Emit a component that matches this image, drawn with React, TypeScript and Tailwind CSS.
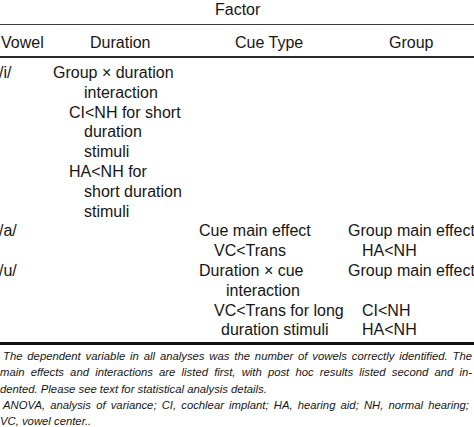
import React from "react";

type Line = { text: string; indent?: number };

type Row = {
  vowel: string;
  duration: Line[];
  cue: Line[];
  group: Line[];
};

const rows: Row[] = [
  {
    vowel: "/i/",
    duration: [
      { text: "Group × duration" },
      { text: "interaction", indent: 31 },
      { text: "CI<NH for short", indent: 16 },
      { text: "duration", indent: 31 },
      { text: "stimuli", indent: 31 },
      { text: "HA<NH for", indent: 16 },
      { text: "short duration", indent: 31 },
      { text: "stimuli", indent: 31 },
    ],
    cue: [],
    group: [],
  },
  {
    vowel: "/a/",
    duration: [],
    cue: [{ text: "Cue main effect" }, { text: "VC<Trans", indent: 15 }],
    group: [{ text: "Group main effect" }, { text: "HA<NH", indent: 14 }],
  },
  {
    vowel: "/u/",
    duration: [],
    cue: [
      { text: "Duration × cue" },
      { text: "interaction", indent: 27 },
      { text: "VC<Trans for long", indent: 15 },
      { text: "duration stimuli", indent: 22 },
    ],
    group: [
      { text: "Group main effect" },
      { text: "" },
      { text: "CI<NH", indent: 14 },
      { text: "HA<NH", indent: 14 },
    ],
  },
];

const Cell: React.FC<{ lines: Line[] }> = ({ lines }) => (
  <div className="flex flex-col">
    {lines.map((line, i) => (
      <div
        key={i}
        className="h-[19.8px] whitespace-nowrap"
        style={{ paddingLeft: line.indent ?? 0 }}
      >
        {line.text}
      </div>
    ))}
  </div>
);

export default function App() {
  return (
    <div className="w-[474px] h-[427px] overflow-hidden bg-white text-[#161616] font-['Liberation_Sans',Arial,sans-serif]">
      <div className="text-[16px] leading-[19.8px]">
        <div className="h-[20px] pl-[215px]">Factor</div>
        <div className="mt-[4px] h-px bg-[#3a3a3a]" />

        <div className="mt-[8px] grid grid-cols-[53px_146px_149px_1fr] h-[20px]">
          <div className="pl-px">Vowel</div>
          <div className="pl-[37px]">Duration</div>
          <div className="pl-[36px]">Cue Type</div>
          <div className="pl-[41px]">Group</div>
        </div>
        <div className="mt-[3px] h-[1.5px] bg-[#2a2a2a]" />

        <div className="mt-[5.5px] flex flex-col">
          {rows.map((row) => (
            <div key={row.vowel} className="grid grid-cols-[53px_146px_149px_1fr]">
              <div className="-ml-px h-[19.8px]">{row.vowel}</div>
              <Cell lines={row.duration} />
              <Cell lines={row.cue} />
              <Cell lines={row.group} />
            </div>
          ))}
        </div>
        <div className="mt-[2px] h-[3px] bg-[#111]" />
      </div>

      <div className="mt-[3px] w-[472px] text-[11.3px] leading-[16.3px] italic">
        <div className="pl-[3px] text-justify [text-align-last:justify]">
          The dependent variable in all analyses was the number of vowels correctly identified. The
        </div>
        <div className="text-justify [text-align-last:justify]">
          main effects and interactions are listed first, with post hoc results listed second and in-
        </div>
        <div>dented. Please see text for statistical analysis details.</div>
        <div className="pl-[3px] pr-[3px] text-justify [text-align-last:justify]">
          ANOVA, analysis of variance; CI, cochlear implant; HA, hearing aid; NH, normal hearing;
        </div>
        <div>VC, vowel center..</div>
      </div>
    </div>
  );
}
